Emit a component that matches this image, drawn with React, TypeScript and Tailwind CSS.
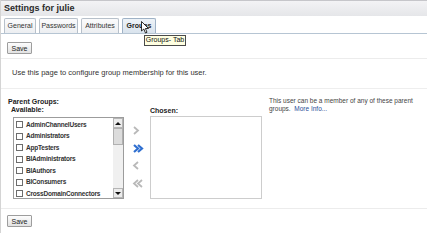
const groups = [
  'AdminChannelUsers',
  'Administrators',
  'AppTesters',
  'BIAdministrators',
  'BIAuthors',
  'BIConsumers',
  'CrossDomainConnectors',
];

const tabs = [
  { label: 'General', w: 'w-[32px]' },
  { label: 'Passwords', w: 'w-[39px]' },
  { label: 'Attributes', w: 'w-[38px]' },
];

function Chevron({ double, left, blue }: { double?: boolean; left?: boolean; blue?: boolean }) {
  const stroke = blue ? '#2f6fd0' : '#b9b9b9';
  const pts = left ? ['6,1 2,4.5 6,8'] : ['2,1 6,4.5 2,8'];
  if (double) pts.push(left ? '10,1 6,4.5 10,8' : '6,1 10,4.5 6,8');
  return (
    <svg width="12" height="9" viewBox="0 0 12 9">
      {pts.map((p) => (
        <polyline key={p} points={p} fill="none" stroke={stroke} strokeWidth={blue ? 2.2 : 1.8} strokeLinejoin="miter" />
      ))}
    </svg>
  );
}

function SaveButton() {
  return (
    <button className="ml-[6px] flex h-[12px] w-[25px] items-center justify-center rounded-[1px] border border-[#9d9d9d] bg-gradient-to-b from-[#fdfdfd] to-[#e2e2e2] text-[7px] leading-none text-[#222]">
      Save
    </button>
  );
}

export default function App() {
  return (
    <div className="relative h-[233px] w-[427px] overflow-hidden border-l border-[#d4d4d4] bg-white font-['Liberation_Sans',Arial,sans-serif] text-[#333]">
      <div className="h-[16px] border-t border-[#c6c6ca] bg-gradient-to-b from-[#f3f3f5] to-[#e5e6e9] pl-[3px] text-[9px] font-bold leading-[15px] text-[#2a2a2a]">
        Settings for julie
      </div>

      <div className="mt-[2px] flex h-[16px] items-end gap-[3px] border-b border-[#b6c5d3] pl-[3px]">
        {tabs.map((t) => (
          <div
            key={t.label}
            className={`${t.w} flex h-[15px] items-center justify-center rounded-t-[2px] border border-b-0 border-[#b7c0ca] bg-gradient-to-b from-[#fbfbfc] to-[#eceef1] text-[7px] text-[#333]`}
          >
            {t.label}
          </div>
        ))}
        <div className="flex h-[15px] w-[34px] items-center justify-center rounded-t-[2px] border border-b-0 border-[#9fb2c6] bg-gradient-to-b from-[#eef3f8] to-[#d9e3ed] text-[7px] font-bold text-[#222]">
          Groups
        </div>
      </div>

      <div className="mt-[8px]">
        <SaveButton />
      </div>
      <div className="mt-[4px] h-px bg-[#ececec]" />

      <p className="mt-[10px] pl-[11px] text-[7.5px] leading-[8px] text-[#333]">
        Use this page to configure group membership for this user.
      </p>
      <div className="mt-[11px] h-px bg-[#eeeeee]" />

      <div className="flex">
        <div>
          <p className="mt-[9px] pl-[7px] text-[7px] font-bold leading-[8px] text-[#222]">Parent Groups:</p>
          <div className="flex">
            <div className="ml-[10px]">
              <p className="text-[7px] font-bold leading-[8px] text-[#222]">Available:</p>
              <div className="ml-[2px] mt-[3px] flex h-[82px] w-[111px] border border-[#9c9c9c] bg-white">
                <div className="flex-1 pl-[2px] pt-[1px]">
                  {groups.map((g) => (
                    <div key={g} className="flex h-[11.5px] items-center gap-[3px]">
                      <span className="h-[7px] w-[7px] border border-[#6d6d6d] bg-white" />
                      <span className="text-[6.5px] font-bold tracking-[-0.2px] text-[#333]">{g}</span>
                    </div>
                  ))}
                </div>
                <div className="flex w-[10px] flex-col bg-[#f0f0f0]">
                  <div className="flex h-[10px] items-center justify-center border border-[#b5b5b5] bg-[#ececec]">
                    <span className="h-0 w-0 border-x-[3px] border-b-[3px] border-x-transparent border-b-[#111]" />
                  </div>
                  <div className="h-[17px] border border-[#b0b0b0] bg-[#dcdcdc]" />
                  <div className="flex-1" />
                  <div className="flex h-[10px] items-center justify-center border border-[#b5b5b5] bg-[#ececec]">
                    <span className="h-0 w-0 border-x-[3px] border-t-[3px] border-x-transparent border-t-[#111]" />
                  </div>
                </div>
              </div>
            </div>

            <div className="ml-[8px] mt-[11px] flex flex-col gap-[8.5px] pt-[9px]">
              <Chevron />
              <Chevron double blue />
              <Chevron left />
              <Chevron double left />
            </div>

            <div className="ml-[6px]">
              <p className="mt-[1px] text-[7px] font-bold leading-[8px] text-[#222]">Chosen:</p>
              <div className="mt-[1px] h-[83px] w-[112px] border border-[#cdcdcd] bg-white" />
            </div>
          </div>
        </div>

        <p className="ml-[7px] mt-[8px] text-[6.5px] leading-[7.5px] text-[#444]">
          This user can be a member of any of these parent
          <br />
          groups.&nbsp;&nbsp;<span className="text-[#2b4d99]">More Info...</span>
        </p>
      </div>

      <div className="mt-[9px] h-px bg-[#ececec]" />
      <div className="mt-[6px]">
        <SaveButton />
      </div>

      <div className="absolute left-[143px] top-[35px] flex h-[11px] w-[42px] items-center justify-center border border-[#4a4a4a] bg-[#ffffe1] text-[7px] text-[#111]">
        Groups- Tab
      </div>

      <svg className="absolute left-[140px] top-[21px]" width="9" height="13" viewBox="0 0 9 13">
        <path d="M0.5 0.5 L0.5 10 L2.8 8 L4.5 12 L6 11.3 L4.4 7.5 L7.5 7.5 Z" fill="#fff" stroke="#000" strokeWidth="0.8" strokeLinejoin="round" />
      </svg>
    </div>
  );
}
